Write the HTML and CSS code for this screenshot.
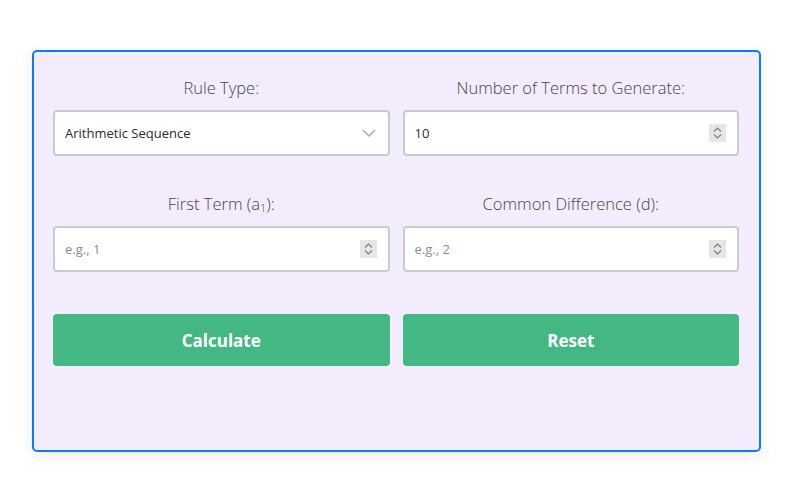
FILE: index.html
```html
<!DOCTYPE html>
<html lang="en">
<head>
    <meta charset="UTF-8">
    <meta name="viewport" content="width=device-width, initial-scale=1.0">
    <title>Sequence Generator</title>
    <link rel="stylesheet" href="styles.css">
</head>
<body>
    <div class="card">
        <form class="seq-form" id="seqForm">
            <div class="field">
                <label for="ruleType">Rule Type:</label>
                <div class="control">
                    <select id="ruleType" name="ruleType">
                        <option>Arithmetic Sequence</option>
                        <option>Geometric Sequence</option>
                    </select>
                    <svg class="chevron" width="14" height="8" viewBox="0 0 14 8"><path d="M1 1l6 6 6-6" fill="none" stroke="#a9a9ae" stroke-width="1.5"/></svg>
                </div>
            </div>
            <div class="field">
                <label for="terms">Number of Terms to Generate:</label>
                <div class="control">
                    <input type="text" id="terms" name="terms" value="10">
                    <span class="spin"><svg width="9" height="14" viewBox="0 0 9 14"><path d="M1 5.5l3.5-3.5 3.5 3.5M1 8.5l3.5 3.5 3.5-3.5" fill="none" stroke="#7a7a80" stroke-width="1.1"/></svg></span>
                </div>
            </div>
            <div class="field">
                <label for="first">First Term (a<sub>1</sub>):</label>
                <div class="control">
                    <input type="text" id="first" name="first" placeholder="e.g., 1">
                    <span class="spin"><svg width="9" height="14" viewBox="0 0 9 14"><path d="M1 5.5l3.5-3.5 3.5 3.5M1 8.5l3.5 3.5 3.5-3.5" fill="none" stroke="#7a7a80" stroke-width="1.1"/></svg></span>
                </div>
            </div>
            <div class="field">
                <label for="diff">Common Difference (d):</label>
                <div class="control">
                    <input type="text" id="diff" name="diff" placeholder="e.g., 2">
                    <span class="spin"><svg width="9" height="14" viewBox="0 0 9 14"><path d="M1 5.5l3.5-3.5 3.5 3.5M1 8.5l3.5 3.5 3.5-3.5" fill="none" stroke="#7a7a80" stroke-width="1.1"/></svg></span>
                </div>
            </div>
            <button type="submit">Calculate</button>
            <button type="reset">Reset</button>
        </form>
    </div>
</body>
</html>
```

FILE: styles.css
```css
body {
    background-color: #ffffff;
    color: #3c3c46;
    font-family: "Open Sans", sans-serif;
    margin: 0;
    padding: 50px 35px 40px 32px;
}

.card {
    background-color: #f3ecfd;
    border: 2px solid #0a7bff;
    border-radius: 5px;
    box-shadow: 0 4px 14px rgba(0, 0, 0, 0.08);
    padding: 25px 20px 80px 19px;
    height: 293px;
}

.seq-form {
    display: grid;
    grid-template-columns: 1fr 1fr;
    column-gap: 13px;
    row-gap: 37px;
}

.field {
    display: flex;
    flex-direction: column;
}

label {
    display: block;
    text-align: center;
    font-size: 16.5px;
    font-weight: 300;
    line-height: 22px;
    margin-bottom: 11px;
    color: #44444e;
}

sub {
    font-size: 11px;
    vertical-align: -2px;
    line-height: 0;
}

.control {
    display: flex;
    align-items: center;
    height: 42px;
    background-color: white;
    border: 2px solid #cbcbcf;
    border-radius: 4px;
    padding: 0 10px 0 10px;
}

select,
input[type="text"] {
    flex: 1;
    border: none;
    outline: none;
    background: transparent;
    font-family: "Open Sans", sans-serif;
    font-size: 13px;
    color: #2a2a33;
    padding: 0;
    -webkit-appearance: none;
    appearance: none;
}

input::placeholder {
    color: #8a8a96;
}

.chevron {
    margin-right: 2px;
}

.spin {
    display: flex;
    align-items: center;
    justify-content: center;
    width: 17px;
    height: 18px;
    margin-right: 1px;
    background-color: #e6e6ea;
}

button {
    background-color: #43b883;
    color: white;
    font-family: "Open Sans", sans-serif;
    font-size: 17px;
    font-weight: 700;
    height: 52px;
    border: none;
    border-radius: 4px;
    cursor: pointer;
    margin-top: 5px;
}

button:hover {
    background-color: #3aa574;
}
```
